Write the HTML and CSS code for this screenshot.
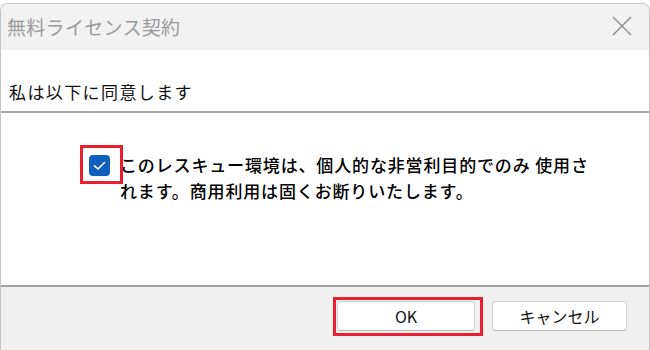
FILE: index.html
```html
<!DOCTYPE html>
<html lang="ja">
<head>
<meta charset="utf-8">
<link rel="stylesheet" href="styles.css">
</head>
<body>
<div class="window">
  <div class="titlebar">
    <span class="title">無料ライセンス契約</span>
    <svg class="close" width="22" height="22" viewBox="0 0 22 22"><path d="M2 2 L20 20 M20 2 L2 20" stroke="#8a8a8a" stroke-width="1.3" fill="none"/></svg>
  </div>
  <div class="content">
    <div class="heading">私は以下に同意します</div>
    <div class="body">
      <div class="agree">
        <div class="check-wrap">
          <div class="checkbox">
            <svg width="21" height="21" viewBox="0 0 21 21"><path d="M5.5 10.8 L9 14 L15.5 7.5" stroke="#fff" stroke-width="1.6" fill="none" stroke-linecap="round" stroke-linejoin="round"/></svg>
          </div>
          <div class="mark mark-check"></div>
        </div>
        <p class="agree-text">このレスキュー環境は、個人的な非営利目的でのみ 使用さ<br>れます。商用利用は固くお断りいたします。</p>
      </div>
    </div>
  </div>
  <div class="footer">
    <div class="btn-wrap">
      <button class="btn">OK</button>
      <div class="mark mark-ok"></div>
    </div>
    <button class="btn btn-cancel">キャンセル</button>
  </div>
</div>
</body>
</html>
```
FILE: styles.css
```css
html, body {
  margin: 0;
  padding: 0;
  background: #ffffff;
}
body {
  width: 650px;
  height: 350px;
  overflow: hidden;
  font-family: "Noto Sans CJK JP", "Noto Sans", sans-serif;
  color: #111;
}
.window {
  margin-top: 3px;
  height: 347px;
  box-sizing: border-box;
  border: 1px solid #c4c4c4;
  border-bottom: none;
  border-radius: 8px 8px 0 0;
  overflow: hidden;
  display: flex;
  flex-direction: column;
}
.titlebar {
  height: 46px;
  flex: 0 0 46px;
  background: #f2f2f2;
  display: flex;
  align-items: center;
  justify-content: space-between;
  padding: 0 16px 0 6px;
}
.title {
  font-size: 19px;
  color: #9a9a9a;
  letter-spacing: 0.3px;
  margin-top: -2px;
}
.close {
  display: block;
  margin-top: -2px;
}
.content {
  flex: 1;
  background: #ffffff;
  display: flex;
  flex-direction: column;
}
.heading {
  height: 63px;
  box-sizing: border-box;
  padding: 30px 0 0 8px;
  font-size: 17px;
  line-height: 24px;
  letter-spacing: 1.4px;
  border-bottom: 2px solid #a8a8a8;
}
.body {
  flex: 1;
  padding: 42px 0 0 88px;
}
.agree {
  display: flex;
  align-items: flex-start;
}
.check-wrap {
  position: relative;
  width: 21px;
  height: 21px;
  flex: 0 0 21px;
}
.checkbox {
  width: 21px;
  height: 21px;
  background: #0f5fbf;
  border-radius: 4px;
}
.checkbox svg {
  display: block;
}
.mark {
  position: absolute;
  border: 3px solid #e8202d;
  box-sizing: border-box;
}
.mark-check {
  left: -9px;
  top: -10px;
  width: 43px;
  height: 39px;
}
.agree-text {
  margin: -3px 0 0 10px;
  font-size: 17px;
  line-height: 26px;
  letter-spacing: 0.85px;
  font-weight: 500;
  color: #000;
}
.footer {
  flex: 0 0 65px;
  box-sizing: border-box;
  border-top: 2px solid #a0a0a0;
  background: #f0f0f0;
  display: flex;
  justify-content: flex-end;
  align-items: flex-start;
  gap: 17px;
  padding: 14px 22px 0 0;
}
.btn-wrap {
  position: relative;
}
.btn {
  display: block;
  width: 138px;
  height: 30px;
  background: #ffffff;
  border: 1px solid #cfcfcf;
  border-bottom-color: #b8b8b8;
  border-radius: 4px;
  font-family: "Noto Sans CJK JP", "Noto Sans", sans-serif;
  font-size: 16px;
  font-weight: 400;
  color: #111;
  padding: 0;
  line-height: 28px;
}
.btn-cancel {
  width: 135px;
}
.mark-ok {
  left: -4px;
  top: -4px;
  width: 150px;
  height: 39px;
}
```
